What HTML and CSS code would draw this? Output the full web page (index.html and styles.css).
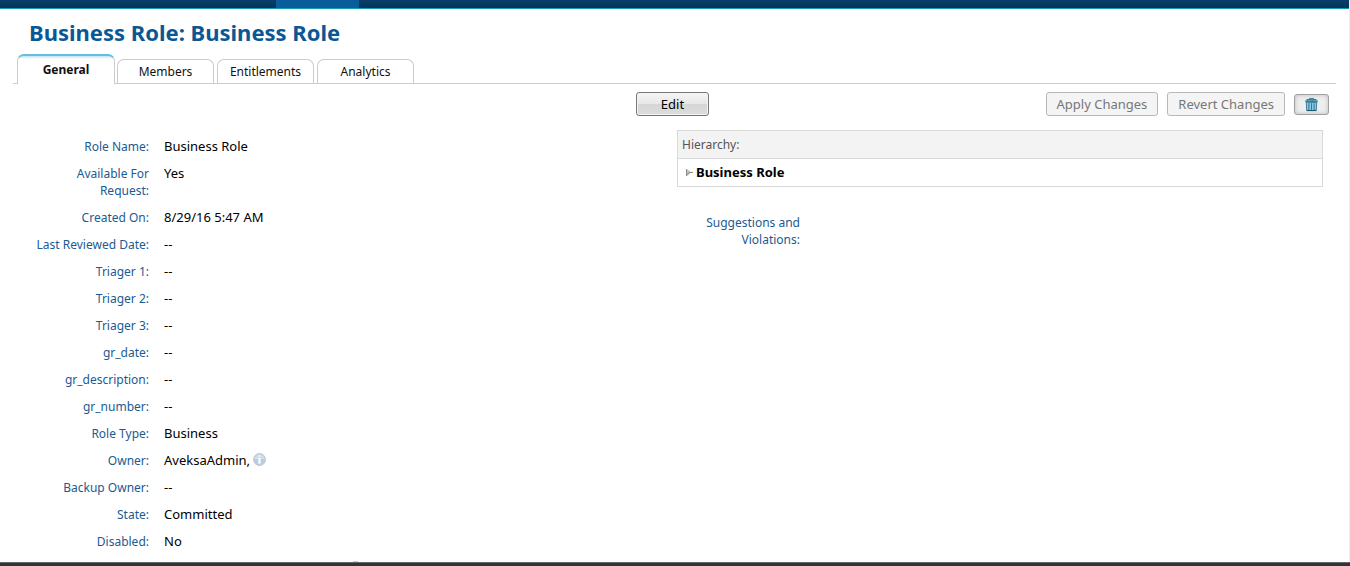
FILE: index.html
```
<!DOCTYPE html>
<html lang="en">
<head>
    <meta charset="UTF-8">
    <meta name="viewport" content="width=device-width, initial-scale=1.0">
    <title>Business Role: Business Role</title>
    <link rel="stylesheet" href="styles.css">
</head>
<body>
    <div class="page">
        <div class="top-nav"><div class="top-nav-active"></div></div>

        <h1>Business Role: Business Role</h1>

        <nav class="tabs">
            <a class="tab active" href="#general">General</a>
            <a class="tab" href="#members">Members</a>
            <a class="tab" href="#entitlements">Entitlements</a>
            <a class="tab" href="#analytics">Analytics</a>
        </nav>

        <div class="toolbar">
            <button class="btn edit" type="button">Edit</button>
            <div class="toolbar-right">
                <button class="btn" type="button" disabled>Apply Changes</button>
                <button class="btn" type="button" disabled>Revert Changes</button>
                <button class="btn trash" type="button" aria-label="Delete">
                    <svg width="15" height="15" viewBox="0 0 15 15">
                        <path d="M5 1.500V.5h5v1" fill="none" stroke="#2d6f90"/>
                        <path d="M.5 4.500V3Q1 1.500 3 1.500h9q2 0 2.500 1.500v1.500z" fill="#5fa8c8"/>
                        <path d="M.5 4.500h14M2 2h11" stroke="#225f7d"/>
                        <path d="M1.500 5h12l-.5 9.500H2z" fill="#8cc8e0" stroke="#2d7394"/>
                        <path d="M4.500 6v8M7.500 6v8M10.500 6v8" stroke="#2a6c8c"/>
                        <path d="M2 14.500h11" stroke="#174d69"/>
                    </svg>
                </button>
            </div>
        </div>

        <main class="content" id="general">
            <dl class="details">
                <dt>Role Name:</dt><dd>Business Role</dd>
                <dt>Available For Request:</dt><dd>Yes</dd>
                <dt>Created On:</dt><dd>8/29/16 5:47 AM</dd>
                <dt>Last Reviewed Date:</dt><dd>--</dd>
                <dt>Triager 1:</dt><dd>--</dd>
                <dt>Triager 2:</dt><dd>--</dd>
                <dt>Triager 3:</dt><dd>--</dd>
                <dt>gr_date:</dt><dd>--</dd>
                <dt>gr_description:</dt><dd>--</dd>
                <dt>gr_number:</dt><dd>--</dd>
                <dt>Role Type:</dt><dd>Business</dd>
                <dt>Owner:</dt>
                <dd>AveksaAdmin,
                    <svg class="info" width="13" height="13" viewBox="0 0 13 13">
                        <circle cx="6.500" cy="6.500" r="6" fill="#b9cce2" stroke="#c3c9d1"/>
                        <path d="M1.500 6a5 4.500 0 0 1 10 0z" fill="#d0deec"/>
                        <path d="M5.500 3h2M5 5.500h2M5 10h3" stroke="#fff"/>
                        <path d="M6.500 5v5" stroke="#fff" stroke-width="2"/>
                    </svg>
                </dd>
                <dt>Backup Owner:</dt><dd>--</dd>
                <dt>State:</dt><dd>Committed</dd>
                <dt>Disabled:</dt><dd>No</dd>
            </dl>

            <div class="side">
                <section class="hierarchy">
                    <h2>Hierarchy:</h2>
                    <div class="tree-node">
                        <svg width="7" height="7" viewBox="0 0 7 7">
                            <path d="M1 0v7L4.500 4H7V3H5z" fill="#c4c4b8"/>
                            <path d="M.5 0v7M1 5.500l2-1.500M3 3.500h4" fill="none" stroke="#8c8c80"/>
                        </svg>
                        <span>Business Role</span>
                    </div>
                </section>
                <dl class="details violations">
                    <dt>Suggestions and Violations:</dt><dd></dd>
                </dl>
            </div>
        </main>
        <footer class="bottom-bar"></footer>
    </div>
</body>
</html>
```

FILE: styles.css
```
* {
    box-sizing: border-box;
}
body {
    margin: 0;
    font-family: "Noto Sans", "Open Sans", sans-serif;
    font-size: 13px;
    line-height: 17px;
    color: #000;
    background: #fff;
}
.page {
    display: flex;
    flex-direction: column;
    min-height: 100vh;
    border-right: 1px solid #eee;
}
.top-nav {
    height: 9px;
    padding-left: 276px;
    background: linear-gradient(#083e69, #05335a);
    border-bottom: 1px solid #109bb0;
}
.top-nav-active {
    width: 83px;
    height: 8px;
    background: #0a5d9c;
}
h1 {
    margin: 8px 0 7px 29px;
    font-size: 22px;
    line-height: 30px;
    color: #0a5796;
}
.tabs {
    display: flex;
    align-items: flex-end;
    gap: 3px;
    height: 30px;
    margin: 0 13px;
    padding-left: 4px;
    border-bottom: 1px solid #ccc;
}
.tab {
    width: 97px;
    height: 24px;
    border: 1px solid #ccc;
    border-bottom: none;
    border-radius: 7px 7px 0 0;
    font-size: 12px;
    line-height: 24px;
    text-align: center;
    text-decoration: none;
    color: #111;
}
.tab.active {
    width: 98px;
    height: 30px;
    margin: 0 -1px -1px 0;
    border-top: 2px solid #68bcdd;
    background: linear-gradient(#bfe5f3, #fff 3px);
    font-weight: bold;
    line-height: 27px;
}
.toolbar {
    display: grid;
    grid-template-columns: 1fr auto 1fr;
    align-items: center;
    margin: 8px 20px 0 16px;
}
.btn {
    height: 24px;
    padding: 0 10px;
    border: 1px solid #777;
    border-radius: 3px;
    background: #f4f4f4;
    font-family: inherit;
    font-size: 13px;
    line-height: 20px;
    color: #000;
}
.btn:disabled {
    border-color: #b4b9ba;
    color: #777;
}
.btn.edit {
    grid-column: 2;
    width: 73px;
    background: linear-gradient(#f6f6f6, #e6e6e6 50%, #d6d6d6 50%, #dcdcdc);
    box-shadow: inset 0 0 0 1px #f4f4f4;
}
.toolbar-right {
    display: flex;
    align-items: center;
    justify-content: flex-end;
    gap: 9px;
}
.btn.trash {
    display: flex;
    align-items: center;
    justify-content: center;
    width: 35px;
    height: 21px;
    border-color: #a0a0a0;
    background: #eee;
    box-shadow: inset 0 0 4px #bbb;
}
.content {
    display: grid;
    grid-template-columns: 1fr 1fr;
    column-gap: 2px;
    flex: 1;
    padding: 14px 26px 12px 29px;
}
.details {
    display: grid;
    grid-template-columns: 120px 1fr;
    align-content: start;
    gap: 10px 15px;
    margin: 8px 0 0;
}
.details dt {
    font-size: 12px;
    text-align: right;
    color: #1b5a92;
}
.details dd {
    margin: 0;
}
.info {
    vertical-align: -1px;
}
.hierarchy {
    border: 1px solid #d9d9d9;
}
.hierarchy h2 {
    margin: 0;
    padding: 5px 4px;
    border-bottom: 1px solid #d9d9d9;
    background: #f3f3f3;
    font-size: 12px;
    font-weight: normal;
    color: #555;
}
.tree-node {
    display: flex;
    align-items: center;
    gap: 3px;
    padding: 5px 8px;
    font-weight: bold;
}
.violations {
    margin: 27px 0 0 3px;
}
.bottom-bar {
    position: relative;
    height: 4px;
    margin-right: -1px;
    background: #333;
    border-top: 1px solid #666;
}
/* top edge of the icon in the row under the bar */
.bottom-bar::before {
    content: "";
    position: absolute;
    top: -2px;
    left: 353px;
    width: 5px;
    height: 1px;
    background: #ccc;
}
```
